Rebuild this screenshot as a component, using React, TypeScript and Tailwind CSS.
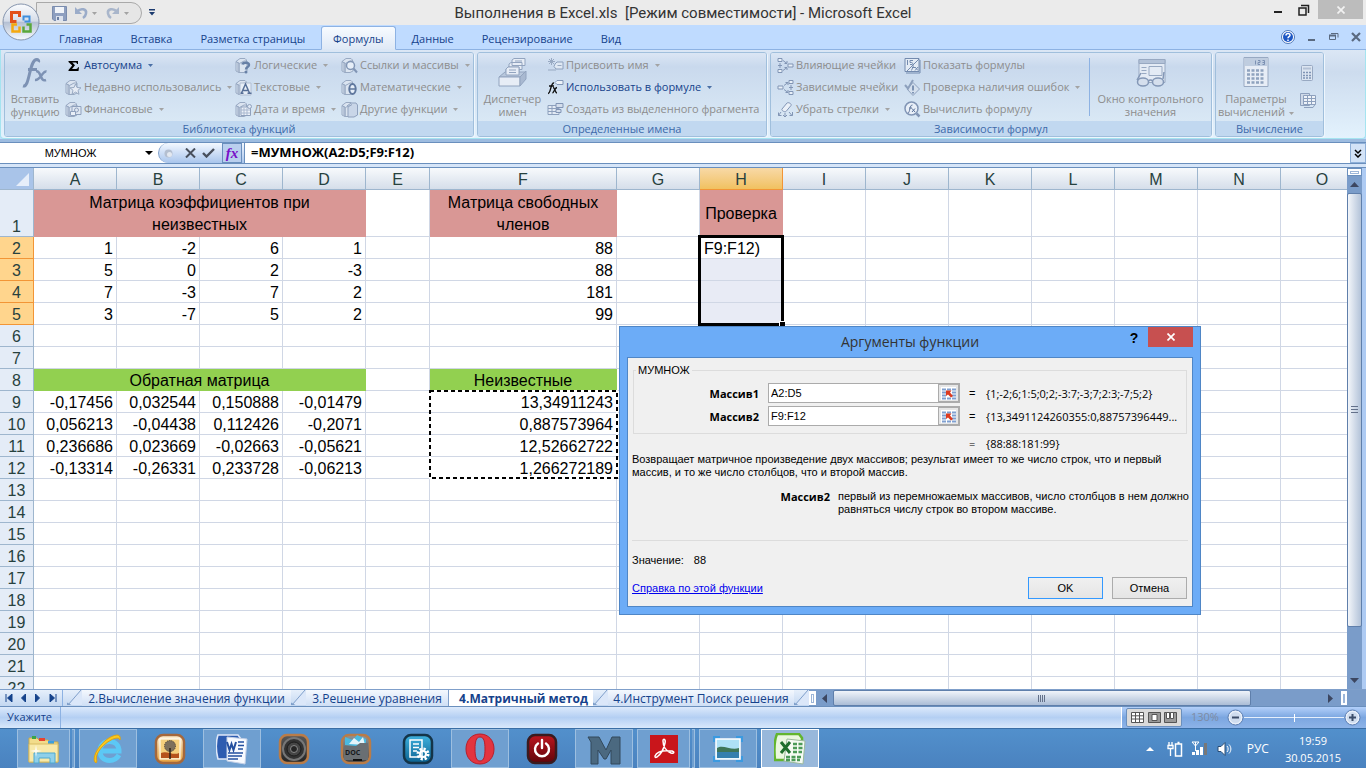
import type { ReactNode } from "react";
import clsx from "clsx";

const columns = [
  { name: "A", width: 83 },
  { name: "B", width: 83 },
  { name: "C", width: 83 },
  { name: "D", width: 83 },
  { name: "E", width: 64 },
  { name: "F", width: 187 },
  { name: "G", width: 83 },
  { name: "H", width: 83 },
  { name: "I", width: 83 },
  { name: "J", width: 83 },
  { name: "K", width: 83 },
  { name: "L", width: 83 },
  { name: "M", width: 83 },
  { name: "N", width: 83 },
  { name: "O", width: 83 },
];

const cells: Record<string, string> = {
  A1: "Матрица коэффициентов при неизвестных",
  F1: "Матрица свободных членов",
  H1: "Проверка",
  A2: "1", B2: "-2", C2: "6", D2: "1", F2: "88", H2: "F9:F12)",
  A3: "5", B3: "0", C3: "2", D3: "-3", F3: "88",
  A4: "7", B4: "-3", C4: "7", D4: "2", F4: "181",
  A5: "3", B5: "-7", C5: "5", D5: "2", F5: "99",
  A8: "Обратная матрица",
  F8: "Неизвестные",
  A9: "-0,17456", B9: "0,032544", C9: "0,150888", D9: "-0,01479", F9: "13,34911243",
  A10: "0,056213", B10: "-0,04438", C10: "0,112426", D10: "-0,2071", F10: "0,887573964",
  A11: "0,236686", B11: "0,023669", C11: "-0,02663", D11: "-0,05621", F11: "12,52662722",
  A12: "-0,13314", B12: "-0,26331", C12: "0,233728", D12: "-0,06213", F12: "1,266272189",
};

const pink = ["A1", "F1", "H1"];
const green = ["A8", "F8"];
const tabs = ["Главная", "Вставка", "Разметка страницы", "Формулы", "Данные", "Рецензирование", "Вид"];

/* ---------- ribbon icons ---------- */

const Book = ({ children }: { children?: ReactNode }) => (
  <svg width="17" height="17" viewBox="0 0 17 17" fill="none" className="shrink-0">
    <path d="M1 4.5 5 1.5h5l1.5 1.5v3M1 4.5V14l3 1.5V6.5L1 4.5Zm0 0L4.5 6.5 9 4h3v10l-3 1.5H4V6.5" fill="#dbe4f0" stroke="#98a9c2" />
    <path d="M2.5 6v8" stroke="#b7c5d9" />
    {children}
  </svg>
);

const Star = () => (
  <Book>
    <path d="m10.500 5 1.500 3.500 4 .3-3 2.500 1 4-3.500-2.200L7 15.300l1-4-3-2.500 4-.3Z" fill="#e6ecf5" stroke="#98a9c2" />
  </Book>
);

const Coins = () => (
  <Book>
    <path d="M7 5.500h9v8H7z" fill="#dfe7f2" stroke="#8fa1bd" />
    <circle cx="11.500" cy="9" r="2" stroke="#8fa1bd" />
    <path d="M5.500 10.500h5v4h-5z" fill="#e9eff7" stroke="#8fa1bd" />
  </Book>
);

const Question = () => (
  <Book>
    <path d="M7.500 7.500c.3-2.300 6.500-2.700 6.500.5 0 2.200-3 2-3 4.500" stroke="#6780a6" strokeWidth="2.400" />
    <circle cx="11" cy="15" r="1.500" fill="#6780a6" />
  </Book>
);

const Letter = () => (
  <Book>
    <path d="M5 4h11v12H5z" fill="#e7eef7" stroke="#b0bed3" />
    <path d="m6.500 14 4-9 4 9M8 11.500h5M5.500 14.300h3M12.500 14.300h4" stroke="#566f97" strokeWidth="1.500" />
  </Book>
);

const Calendar = () => (
  <Book>
    <path d="M6 6h9.500v8.500H6z" fill="#edf2f9" stroke="#8fa1bd" />
    <path d="M6 9h9M6 12h9M9 7v7M12 7v7" stroke="#a9b8cf" />
    <circle cx="14.500" cy="5.500" r="2" fill="#dfe7f2" stroke="#8fa1bd" />
  </Book>
);

const Lookup = () => (
  <Book>
    <circle cx="9.500" cy="8.500" r="4" fill="#e6eef8" stroke="#8195b5" strokeWidth="1.500" />
    <path d="m12.500 11.500 3.500 4" stroke="#8195b5" strokeWidth="2" />
  </Book>
);

const Theta = () => (
  <Book>
    <ellipse cx="11.500" cy="10" rx="3.200" ry="5" fill="#e6eef8" stroke="#5f779e" strokeWidth="2" />
    <path d="M8.500 10h6" stroke="#5f779e" strokeWidth="1.500" />
  </Book>
);

const Books = () => (
  <Book>
    <path d="m6 5 4-3h5l1.500 2v10L13 16H7V6l4-2.500" fill="#c9d6e8" stroke="#8fa1bd" />
  </Book>
);

const Sigma = () => (
  <svg width="17" height="17" viewBox="0 0 17 17" className="shrink-0">
    <path d="M3.500 4h9.500v3h-1c-.3-1.200-.7-1.500-2-1.500H7.300L10 8.300 7 12h4c1.300 0 1.700-.5 2-1.700h1l-.5 3.700h-10v-1l3.700-4.500L3.500 5Z" fill="#000" />
  </svg>
);

const NewName = () => (
  <svg width="17" height="17" viewBox="0 0 17 17" fill="none" className="shrink-0">
    <path d="m8 7 2-2h6v7H9L7 9.500Z" fill="#dfe8f3" stroke="#8da0bd" />
    <path d="M10.500 8.500h4M1 13h8M4.500 1v7M1 4.500h7M2 2l5 5M7 2 2 7" stroke="#98a9c2" />
  </svg>
);

const UseName = () => (
  <svg width="17" height="17" viewBox="0 0 17 17" fill="none" className="shrink-0">
    <path d="M1 14.500c3 0 2.500-11 6-10.500M2 7h5M6 8.500c2 0 2 5.500 4 5.500M10 8.500c-2 0-3 5-4.500 5.500" stroke="#111" strokeWidth="1.400" />
    <path d="m8 3.500 2-2h6v4H10Z" fill="#edf2f9" stroke="#8195b5" />
  </svg>
);

const CreateNames = () => (
  <svg width="17" height="17" viewBox="0 0 17 17" fill="none" className="shrink-0">
    <path d="M1 4.500h11v9H1zM1 7.500h11M1 10.500h11M5 4.500v9" fill="#e3ebf5" stroke="#8da0bd" />
    <path d="M9 2.500h7v4H9zM9 8.500h5v3H9z" fill="#d4deec" stroke="#8195b5" />
  </svg>
);

const Precedents = () => (
  <svg width="17" height="17" viewBox="0 0 17 17" fill="none" className="shrink-0" stroke="#8195b5">
    <path d="M1 1.500h4v3H1zM1 12.500h4v3H1zM11 7h5v3h-5z" fill="#e9f0f8" />
    <path d="M3 6v5M1 8.500h4M6 3.500l4 3M10 4v2.500H7.500M6 13.500l4-3M10 13v-2.500H7.500" />
  </svg>
);

const Dependents = () => (
  <svg width="17" height="17" viewBox="0 0 17 17" fill="none" className="shrink-0" stroke="#8195b5">
    <path d="M12 1.500h4v3h-4zM12 12.500h4v3h-4zM1 7h5v3H1z" fill="#e9f0f8" />
    <path d="M14 6v5M12 8.500h4M7 6.500l4-3M8.500 3.500H11V6M7 10.500l4 3M8.500 13.500H11V11" />
  </svg>
);

const ClearArrows = () => (
  <svg width="17" height="17" viewBox="0 0 17 17" fill="none" className="shrink-0" stroke="#8195b5">
    <path d="m5 8 5-6c1-1 5 .5 4 2.500l-5 6c-1 1-5-1-4-2.500Z" fill="#eaf0f8" />
    <path d="M4 11l-2.500 3.500M1.500 11.500v3h3M8 12v4M6 14l2 2 2-2M12 11l3 3.500M15.500 11v3.500h-3" />
  </svg>
);

const ShowFormulas = () => (
  <svg width="17" height="17" viewBox="0 0 17 17" fill="none" className="shrink-0" stroke="#738aae">
    <path d="M1 1.500h14v13H1z" fill="#e3ebf5" />
    <path d="M15 2 2 15M3.500 3v5M6 7.500h2c1 0 1-2-.500-2H6V3.500h3M7 13.500c1.500 0 1.500-5 3-5M8 10.500h3M11 10l3 3.500M14 10l-3 3.500M2 16h14V3" />
  </svg>
);

const ErrorCheck = () => (
  <svg width="17" height="17" viewBox="0 0 17 17" fill="none" className="shrink-0" stroke="#8da0bd">
    <path d="m9 3.500 6.500 6.500L9 16.500 3 10Z" fill="#d4dfed" />
    <path d="M1 6l3 3.500L9 1" strokeWidth="2" />
    <path d="M9 6.500v5M9 13v1.500" stroke="#617aa1" strokeWidth="1.500" />
  </svg>
);

const Evaluate = () => (
  <svg width="17" height="17" viewBox="0 0 17 17" fill="none" className="shrink-0" stroke="#8195b5">
    <circle cx="7.500" cy="7.500" r="6.500" fill="#e8eff8" strokeWidth="1.500" />
    <path d="m12.500 12.500 3 3" strokeWidth="2.500" />
    <path d="M4 12C6 12 5.500 3.500 8.500 4M5 7h3M8 7.500l3 3.500M11 7.500 8 11" stroke="#5a7299" />
  </svg>
);

const BigFx = () => (
  <svg width="32" height="32" viewBox="0 0 32 32" fill="none" stroke="#7d92b4">
    <path d="M4 29c7 2 6-27 14-26.500 1.500.2 2 1.500 1.500 2.500M9 12.500h9" strokeWidth="3" />
    <path d="M17 14.500c5-2 4 11 10 8.500M27.500 14.500c-4-1-6 9-11.500 8.500" strokeWidth="2.500" />
  </svg>
);

const NameManager = () => (
  <svg width="32" height="32" viewBox="0 0 32 32" fill="#e7edf6" stroke="#92a4bf">
    <path d="m15 3 2-1.500h11v7H15ZM12 7l2-1.500h11v7H12ZM9 12l2-2h11v8H9Z" />
    <path d="m2 20 6-5h21l-5 5H2Z" fill="#b8c7dc" />
    <path d="m9 12 2-2h11v8H9Z" />
    <path d="M2 20h21v9H2z" />
    <path d="m23 20 6-6v8l-6 7Z" fill="#a9b9d1" />
    <path d="M12 13h7M12 15.500h7M15 8.500h7M18 4h7" />
  </svg>
);

const WatchWindow = () => (
  <svg width="32" height="32" viewBox="0 0 32 32" fill="none" stroke="#98a9c2">
    <path d="M4 2.500h26v23H4z" fill="#e4ebf5" />
    <path d="M4 2.500h26v4H4z" fill="#b3c2d8" />
    <path d="M14 9.500h13v9H14zM6.500 10.500h5M6.500 13.500h5M6.500 16.500h5" />
    <path d="M2 23 6 16M28 22l1-7" stroke="#8397b6" strokeWidth="1.500" />
    <ellipse cx="8" cy="25" rx="5.500" ry="4" fill="#d5dfed" stroke="#8397b6" strokeWidth="1.500" />
    <ellipse cx="23" cy="25" rx="5.500" ry="4" fill="#d5dfed" stroke="#8397b6" strokeWidth="1.500" />
    <path d="M13.500 24c1-1.500 3-1.500 4 0" stroke="#8397b6" strokeWidth="1.500" />
  </svg>
);

const CalcOptions = () => (
  <svg width="32" height="32" viewBox="0 0 32 32" fill="none" stroke="#98a9c2">
    <path d="M4 .5h24v29H4z" fill="#e7edf6" />
    <path d="M5 1h22v8H5z" fill="#bfcde0" stroke="none" />
    <path d="M15.500 3.500v4M18 3.500h2v2h-2v2h2M22.500 3.500h2v4h-2M22.500 5.500h2" stroke="#7c91b3" />
    <path d="M7 13.500h18M7 17.500h18M7 21.500h18M7 25.500h18" stroke="#8fa2be" strokeWidth="2.500" strokeDasharray="3 1.500" />
  </svg>
);

const SmallCalc = () => (
  <svg width="16" height="18" viewBox="0 0 16 18" fill="none" stroke="#98a9c2">
    <rect x="2.500" y="1.500" width="11" height="15" rx="1" fill="#dce5f1" />
    <path d="M4 4.500h8" strokeWidth="2" stroke="#b3c1d6" />
    <path d="M4 8.500h8M4 11.500h8M4 14h8" stroke="#7f94b5" strokeWidth="1.500" strokeDasharray="2 1" />
  </svg>
);

const SheetCalc = () => (
  <svg width="17" height="18" viewBox="0 0 17 18" fill="none" stroke="#8da0bd">
    <path d="M1.500 1.500h9v12h-9z" fill="#ced9e8" />
    <path d="M4.500 3.500h12v9h-12z" fill="#eef3f9" />
    <path d="M4.500 6.500h12M4.500 9.500h12M8.500 3.500v9M12.500 3.500v9M5 15.500h9l2-3" />
  </svg>
);

const Caret = ({ dark }: { dark?: boolean }) => (
  <svg width="5" height="3" viewBox="0 0 5 3" className="ml-1 inline-block shrink-0">
    <path d="M0 0h5L2.500 3Z" fill={dark ? "#4a6fa5" : "#a3a3a3"} />
  </svg>
);

const RibbonItem = ({ icon, label, active, menu }: { icon: ReactNode; label: string; active?: boolean; menu?: boolean }) => (
  <button
    type="button"
    className={clsx("flex h-[22px] items-center gap-[2px] whitespace-nowrap", active ? "text-[#15428b]" : "text-[#8d8d8d]")}
  >
    {icon}
    <span>{label}</span>
    {menu && <Caret dark={active} />}
  </button>
);

const BigButton = ({ icon, lines, menu }: { icon: ReactNode; lines: string[]; menu?: boolean }) => (
  <button type="button" className="flex flex-col items-center pt-[4px] leading-[13px] whitespace-nowrap text-[#8d8d8d]">
    <span className="mb-[3px]">{icon}</span>
    <span>{lines[0]}</span>
    <span>
      {lines[1]}
      {menu && <Caret />}
    </span>
  </button>
);

const Group = ({ title, className, children }: { title: string; className: string; children: ReactNode }) => (
  <section className={clsx("flex h-[85px] shrink-0 flex-col overflow-hidden rounded-[3px] border border-[#a0bfdc] shadow-[1px_1px_0_#eef6fd]", className)}>
    <div className="flex min-h-0 flex-1 justify-between bg-linear-to-b from-[#dbe6f4] via-[#c9d9ed] via-20% to-[#d9e8f5]">{children}</div>
    <h2 className="h-[15px] shrink-0 bg-[#c1d8f0] text-center leading-[15px] text-[#3e6aaa]">{title}</h2>
  </section>
);

/* ---------- window chrome ---------- */

const OfficeButton = () => (
  <button type="button" aria-label="Office" className="absolute top-[3px] left-[2px] z-10">
    <svg width="38" height="38" viewBox="0 0 38 38" fill="none">
      <defs>
        <linearGradient id="orb" x1="0" y1="0" x2="0" y2="1">
          <stop offset="0" stopColor="#fbfcfe" />
          <stop offset=".48" stopColor="#d5dce8" />
          <stop offset=".5" stopColor="#b3bfd2" />
          <stop offset="1" stopColor="#f8fbff" />
        </linearGradient>
      </defs>
      <circle cx="19" cy="19" r="18" fill="url(#orb)" stroke="#8594ad" />
      <path d="M17.500 14V9.500h-8v9h5" stroke="#e2511a" strokeWidth="3" />
      <path d="M21.500 17.500v-4h6v5h-5" stroke="#3f8fdd" strokeWidth="2" />
      <path d="M15 21.500h-4.500v7h7v-5" stroke="#f5a90f" strokeWidth="2.500" />
      <path d="M21.500 23.500v5h7v-7h-4" stroke="#59a83b" strokeWidth="2.500" />
    </svg>
  </button>
);

const TitleBar = () => (
  <header className="grid h-[25px] shrink-0 grid-cols-[1fr_auto_1fr] bg-[#ebebeb]">
    <div className="flex items-start pt-[2px] pl-9">
      <div className="flex h-[22px] w-[106px] items-center rounded-r-full border border-[#a9a9a9] bg-[#e6e6e6] pl-[15px]">
        <button type="button" aria-label="Сохранить">
          <svg width="15" height="15" viewBox="0 0 15 15">
            <path d="M.5.500h14v14H2l-1.500-1.500Z" fill="#8e9fc0" stroke="#7a8cae" />
            <path d="M3 1h9v6H3z" fill="#f1f4f9" />
            <path d="M4 10h7v5H4z" fill="#dde3ee" />
            <path d="M5 11h2v3H5z" fill="#6c7fa3" />
          </svg>
        </button>
        <button type="button" aria-label="Отменить" className="ml-2 flex items-center">
          <svg width="14" height="14" viewBox="0 0 14 14" fill="none">
            <path d="M2 5.500C6 1.500 12 3 11 7.500c-.3 2-1.500 3.500-3 4.500" stroke="#9bacc9" strokeWidth="2.500" />
            <path d="M0 1v7h7Z" fill="#9bacc9" />
          </svg>
          <svg width="5" height="3" viewBox="0 0 5 3" className="ml-[3px]"><path d="M0 0h5L2.500 3Z" fill="#a3a3a3" /></svg>
        </button>
        <button type="button" aria-label="Вернуть" className="ml-2 flex items-center">
          <svg width="14" height="14" viewBox="0 0 14 14" fill="none">
            <path d="M12 5.500C8 1.500 2 3 3 7.500c.3 2 1.500 3.500 3 4.500" stroke="#a9b6cb" strokeWidth="2.500" />
            <path d="M14 1v7H7Z" fill="#a9b6cb" />
          </svg>
          <svg width="5" height="3" viewBox="0 0 5 3" className="ml-[5px]"><path d="M0 0h5L2.500 3Z" fill="#a3a3a3" /></svg>
        </button>
      </div>
      <button type="button" aria-label="Настройка панели" className="mt-[7px] ml-[7px]">
        <svg width="6" height="7" viewBox="0 0 6 7"><path d="M0 0h6v1.500H0zM0 3h6L3 6.500Z" fill="#1c3b6f" /></svg>
      </button>
    </div>
    <h1 className="pt-px font-['Roboto','Open_Sans',sans-serif] text-[15px] leading-[24px] whitespace-pre text-[#333]">Выполнения в Excel.xls  [Режим совместимости] - Microsoft Excel</h1>
    <div className="flex items-start justify-end pr-[3px]">
      <button type="button" aria-label="Свернуть" className="flex h-[19px] w-[26px] items-center">
        <svg width="12" height="12" viewBox="0 0 12 12"><path d="M2 7h8v2H2z" fill="#222" /></svg>
      </button>
      <button type="button" aria-label="Восстановить" className="flex h-[19px] w-5 items-center">
        <svg width="12" height="12" viewBox="0 0 12 12" fill="none" stroke="#222"><path d="M1 4h7v7H1zM3 1.500h7.500V9" strokeWidth="1.500" /></svg>
      </button>
      <button type="button" aria-label="Закрыть" className="flex h-[19px] w-[45px] items-center justify-center bg-[#bcbcbc]">
        <svg width="8" height="8" viewBox="0 0 8 8" stroke="#f2f2f2" strokeWidth="1.700"><path d="m.5.500 7 7M7.500.500l-7 7" /></svg>
      </button>
    </div>
  </header>
);

const TabRow = () => (
  <nav className="flex h-[25px] shrink-0 items-end justify-between border-b border-[#8db2e3] bg-[#bfdbff] pl-[47px]">
    <div className="flex h-full items-end gap-[4px] text-[11px]">
      {tabs.map((tab) => (
        <button
          key={tab}
          type="button"
          className={clsx(
            "-mb-px h-[24px] rounded-t-[3px] border px-[11px] leading-[23px] text-[#15428b]",
            tab === "Формулы" ? "border-[#8db2e3] border-b-[#dbe7f5] bg-linear-to-b from-[#f7fbff] to-[#dfe9f6]" : "border-transparent",
          )}
        >
          {tab}
        </button>
      ))}
    </div>
    <div className="flex h-full items-center gap-3 pr-[5px]">
      <button type="button" aria-label="Справка">
        <svg width="14" height="14" viewBox="0 0 14 14" fill="none">
          <circle cx="7" cy="7" r="6.500" fill="#fff" stroke="#4f78b8" />
          <circle cx="7" cy="7" r="5" fill="#1d57c4" />
          <path d="M5 5.500C5 3 9 3 9 5.200c0 1.500-2 1.400-2 3M7 9.500V11" stroke="#fff" strokeWidth="1.500" />
        </svg>
      </button>
      <button type="button" aria-label="Свернуть книгу">
        <svg width="10" height="10" viewBox="0 0 10 10"><path d="M1 7h7v2H1z" fill="#5a6a80" /></svg>
      </button>
      <button type="button" aria-label="Восстановить книгу">
        <svg width="10" height="10" viewBox="0 0 10 10" fill="none" stroke="#5a6a80"><path d="M.5 3.500h6v4h-6zM2 1.500h7v4" /><path d="M0 3.500h7" strokeWidth="2" /></svg>
      </button>
      <button type="button" aria-label="Закрыть книгу">
        <svg width="10" height="10" viewBox="0 0 10 10" stroke="#5a6a80" strokeWidth="2.200"><path d="m1 1 8 8M9 1 1 9" /></svg>
      </button>
    </div>
  </nav>
);

const Ribbon = () => (
  <div className="h-[92px] shrink-0 border-b-[3px] border-[#9dbce0] bg-[#bfdbff]">
    <div className="flex h-[89px] gap-[3px] overflow-hidden rounded-b-[4px] border-x border-b border-[#a5e4f0] bg-linear-to-b from-[#dbe7f5] via-[#cddcee] via-25% to-[#e3f2fd] pt-[2px] pl-[3px] text-[11px]">
      <Group title="Библиотека функций" className="w-[470px]">
        <div className="grid w-full grid-cols-[60px_170px_106px_1fr]">
          <BigButton icon={<BigFx />} lines={["Вставить", "функцию"]} />
          <div className="flex flex-col pt-px">
            <RibbonItem icon={<Sigma />} label="Автосумма" active menu />
            <RibbonItem icon={<Star />} label="Недавно использовались" menu />
            <RibbonItem icon={<Coins />} label="Финансовые" menu />
          </div>
          <div className="flex flex-col pt-px">
            <RibbonItem icon={<Question />} label="Логические" menu />
            <RibbonItem icon={<Letter />} label="Текстовые" menu />
            <RibbonItem icon={<Calendar />} label="Дата и время" menu />
          </div>
          <div className="flex flex-col pt-px">
            <RibbonItem icon={<Lookup />} label="Ссылки и массивы" menu />
            <RibbonItem icon={<Theta />} label="Математические" menu />
            <RibbonItem icon={<Books />} label="Другие функции" menu />
          </div>
        </div>
      </Group>
      <Group title="Определенные имена" className="w-[290px]">
        <div className="grid w-full grid-cols-[69px_1fr]">
          <BigButton icon={<NameManager />} lines={["Диспетчер", "имен"]} />
          <div className="flex flex-col pt-px">
            <RibbonItem icon={<NewName />} label="Присвоить имя" menu />
            <RibbonItem icon={<UseName />} label="Использовать в формуле" active menu />
            <RibbonItem icon={<CreateNames />} label="Создать из выделенного фрагмента" />
          </div>
        </div>
      </Group>
      <Group title="Зависимости формул" className="w-[442px]">
        <div className="grid w-full grid-cols-[127px_185px_1fr] pl-[6px]">
          <div className="flex flex-col pt-px">
            <RibbonItem icon={<Precedents />} label="Влияющие ячейки" />
            <RibbonItem icon={<Dependents />} label="Зависимые ячейки" />
            <RibbonItem icon={<ClearArrows />} label="Убрать стрелки" menu />
          </div>
          <div className="flex flex-col pt-px">
            <RibbonItem icon={<ShowFormulas />} label="Показать формулы" />
            <RibbonItem icon={<ErrorCheck />} label="Проверка наличия ошибок" menu />
            <RibbonItem icon={<Evaluate />} label="Вычислить формулу" />
          </div>
          <div className="flex">
            <span className="my-[5px] border-l border-[#8db2e3]" />
            <div className="grid flex-1">
              <BigButton icon={<WatchWindow />} lines={["Окно контрольного", "значения"]} />
            </div>
          </div>
        </div>
      </Group>
      <Group title="Вычисление" className="w-[109px]">
        <div className="grid w-full grid-cols-[80px_1fr]">
          <BigButton icon={<CalcOptions />} lines={["Параметры", "вычислений"]} menu />
          <div className="flex flex-col items-start gap-[10px] pt-[11px] pl-[3px]">
            <button type="button" aria-label="Пересчет"><SmallCalc /></button>
            <button type="button" aria-label="Произвести вычисления"><SheetCalc /></button>
          </div>
        </div>
      </Group>
    </div>
  </div>
);

const FormulaBar = () => (
  <div className="flex h-[26px] shrink-0 border-b border-[#6a8fbd] bg-[#d6e5f8] pb-[3px]">
    <div className="flex min-w-0 flex-1 border-y border-[#6a8fbd] bg-white">
      <div className="flex w-[158px] shrink-0 items-center">
        <input aria-label="Имя" defaultValue="МУМНОЖ" className="h-full w-[141px] text-center font-['Liberation_Sans',sans-serif] text-[11px] outline-none" />
        <button type="button" aria-label="Список функций" className="ml-[4px]">
          <svg width="8" height="4" viewBox="0 0 8 4"><path d="M0 0h8L4 4Z" fill="#000" /></svg>
        </button>
      </div>
      <div className="flex w-[86px] shrink-0 items-center justify-between rounded-l-full border-l border-[#7f9fca] bg-linear-to-b from-[#f3f8ff] to-[#a9c5ec] pl-[5px]">
        <svg width="9" height="9" viewBox="0 0 9 9"><circle cx="4.500" cy="4.500" r="4" fill="#b4bfd0" /><circle cx="5.500" cy="5.500" r="2.500" fill="#e3e8f0" /></svg>
        <button type="button" aria-label="Отмена ввода" className="ml-[5px]">
          <svg width="11" height="10" viewBox="0 0 11 10" stroke="#484f5c" strokeWidth="2"><path d="m1 .5 9 9M10 .5l-9 9" /></svg>
        </button>
        <button type="button" aria-label="Ввод">
          <svg width="13" height="10" viewBox="0 0 13 10" fill="none" stroke="#484f5c" strokeWidth="2.400"><path d="m1 5 3.500 3.500L12 1" /></svg>
        </button>
        <button type="button" aria-label="Вставить функцию" className="mr-[2px] flex h-full w-[20px] items-center justify-center border border-[#6a8fbd] bg-[#b9cfee] font-['Liberation_Serif',serif] text-[15px] leading-none font-bold text-[#7a10c8] italic">
          fx
        </button>
      </div>
      <input aria-label="Строка формул" defaultValue="=МУМНОЖ(A2:D5;F9:F12)" className="min-w-0 flex-1 border-l border-[#6a8fbd] pl-[6px] text-[13px] font-bold text-black outline-none" />
      <button type="button" aria-label="Развернуть строку формул" className="flex w-4 items-center justify-center border border-[#8fb0d8] bg-[#d3e3f7]">
        <svg width="8" height="9" viewBox="0 0 8 9" fill="none" stroke="#000" strokeWidth="1.500"><path d="m1 1 3 3 3-3M1 5l3 3 3-3" /></svg>
      </button>
    </div>
  </div>
);

/* ---------- sheet ---------- */

const Cell = ({ name }: { name: string }) => {
  const text = cells[name];
  const isPink = pink.includes(name);
  const isGreen = green.includes(name);
  const selected = ["H3", "H4", "H5"].includes(name);
  return (
    <td
      colSpan={name === "A1" || name === "A8" ? 4 : 1}
      className={clsx(
        "relative border-r border-b pb-0",
        isPink && "border-[#d99795] bg-[#d99795] pt-[2px] text-center align-middle leading-[22px]",
        isPink && (name === "A1" ? "px-10" : "px-0"),
        isGreen && "border-[#92d050] bg-[#92d050] px-0 pt-[2px] text-center",
        !isPink && !isGreen && "border-[#d0d7e5] pt-[2px] pr-[3px] pl-0 text-right whitespace-nowrap",
        selected && "bg-[#e8ebf5]",
      )}
    >
      {name === "H2" ? <span className="block pl-1 text-left">{text}</span> : text}
      {name === "H2" && (
        <span className="pointer-events-none absolute -top-[2px] -left-[2px] z-10 h-[91px] w-[86px] border-[3px] border-black">
          <span className="absolute -right-[4px] -bottom-[4px] size-[6px] border-t border-l border-white bg-black" />
        </span>
      )}
      {name === "F9" && (
        <svg width="189" height="89" viewBox="0 0 189 89" fill="none" className="pointer-events-none absolute -top-px -left-px z-10">
          <path d="M1 1h187v87H1Z" stroke="#fff" strokeWidth="2" />
          <path d="M1 1h187v87H1Z" stroke="#000" strokeWidth="2" strokeDasharray="4 3" />
        </svg>
      )}
    </td>
  );
};

const Sheet = () => (
  <div className="min-w-0 flex-1 overflow-hidden">
    <table className="w-px table-fixed border-separate border-spacing-0 font-['Liberation_Sans',sans-serif] text-[16px] leading-[19px] text-black">
      <colgroup>
        <col className="w-[34px]" />
        {columns.map((c) => (
          <col key={c.name} style={{ width: c.width }} />
        ))}
      </colgroup>
      <thead>
        <tr className="h-[22px] text-[#27413e]">
          <td className="border-r border-b border-[#9eb6ce] bg-[#a9c4e9] p-0">
            <svg width="33" height="20" viewBox="0 0 33 20"><path d="M29 4v13H16Z" fill="#e6eefa" /></svg>
          </td>
          {columns.map((c) => (
            <th
              key={c.name}
              scope="col"
              className={clsx(
                "border-r border-b bg-linear-to-b px-0 pt-[2px] pb-0 font-normal",
                c.name === "H" ? "border-[#f29536] from-[#f8d9a6] to-[#f1c15f]" : "border-[#9eb6ce] from-[#f8fafc] to-[#d5deea]",
              )}
            >
              {c.name}
            </th>
          ))}
        </tr>
      </thead>
      <tbody>
        {Array.from({ length: 22 }, (_, i) => i + 1).map((row) => (
          <tr key={row} className={row === 1 ? "h-[47px]" : "h-[22px]"}>
            <th
              scope="row"
              className={clsx(
                "border-r border-b px-0 pt-[2px] pb-0 align-bottom font-normal text-[#27413e]",
                row >= 2 && row <= 5 ? "border-[#f29536] bg-[#ffd58d]" : "border-[#9eb6ce] bg-[#e4ecf7]",
              )}
            >
              {row}
            </th>
            {columns
              .filter((c) => !((row === 1 || row === 8) && ["B", "C", "D"].includes(c.name)))
              .map((c) => (
                <Cell key={c.name} name={c.name + row} />
              ))}
          </tr>
        ))}
      </tbody>
    </table>
  </div>
);

const VerticalScroll = () => (
  <div className="flex w-[19px] shrink-0 border-r-4 border-[#aecbf3] bg-[#7a9cc9]">
    <div className="flex w-full flex-col items-center">
      <div className="flex h-[8px] w-full shrink-0 items-center justify-center border border-[#6a8fbd] bg-white">
        <span className="h-[3px] w-[9px] border border-[#9db6d8]" />
      </div>
      <button type="button" aria-label="Вверх" className="flex h-[17px] w-full shrink-0 items-center justify-center">
        <svg width="9" height="5" viewBox="0 0 9 5"><path d="M0 5h9L4.500 0Z" fill="#3c4660" /></svg>
      </button>
      <div className="flex h-[434px] w-full items-center justify-center rounded-[2px] border border-[#5f7fab] bg-linear-to-r from-[#f3f6fa] to-[#b3c3d9]">
        <svg width="7" height="9" viewBox="0 0 7 9" stroke="#63718a"><path d="M0 .5h7M0 3.500h7M0 6.500h7" /></svg>
      </div>
      <span className="flex-1" />
      <button type="button" aria-label="Вниз" className="flex h-[17px] w-full shrink-0 items-center justify-center">
        <svg width="9" height="5" viewBox="0 0 9 5"><path d="M0 0h9L4.500 5Z" fill="#3c4660" /></svg>
      </button>
    </div>
  </div>
);

const Slash = () => (
  <svg width="15" height="15" viewBox="0 0 15 15" className="shrink-0" fill="none">
    <path d="M1 15 14 0h1v15Z" fill="#dbe7f9" />
    <path d="M1 15 14 0" stroke="#7f9fca" />
    <path d="M0 12.500V15h4.500Z" fill="#7f9fca" />
  </svg>
);

const SheetTabs = () => (
  <div className="flex h-[17px] shrink-0 border-t border-[#7f9fca] bg-linear-to-b from-[#e6effb] to-[#c3d7f1] text-[12px]">
    <div className="flex w-[63px] shrink-0 items-center justify-between border-r border-[#8db2e3] px-[5px]">
      {["M1 0v8M7 0v8L2.500 4Z", "M5.500 0v8L1.500 4Z", "M1.500 0v8l4-4Z", "M7 0v8M1 0v8l4.500-4Z"].map((d) => (
        <button key={d} type="button" aria-label="Листать">
          <svg width="8" height="8" viewBox="0 0 8 8" fill="#15428b" stroke="#15428b"><path d={d} /></svg>
        </button>
      ))}
    </div>
    <div className="flex w-[746px] shrink-0 overflow-hidden pl-[4px] leading-[15px] whitespace-nowrap text-[#15428b]">
      <Slash />
      <button type="button" className="w-[209px] shrink-0 bg-linear-to-b from-[#f4f8fe] to-[#cfdff5] text-center">2.Вычисление значения функции</button>
      <Slash />
      <button type="button" className="w-[143px] shrink-0 border-r border-[#7f9fca] bg-linear-to-b from-[#f4f8fe] to-[#cfdff5] text-center">3.Решение уравнения</button>
      <button type="button" className="w-[144px] shrink-0 bg-white pl-[5px] text-center font-bold">4.Матричный метод</button>
      <Slash />
      <button type="button" className="w-[186px] shrink-0 bg-linear-to-b from-[#f4f8fe] to-[#cfdff5] text-center">4.Инструмент Поиск решения</button>
      <Slash />
    </div>
    <div className="flex min-w-0 flex-1 items-stretch bg-[#7a9cc9]">
      <span className="my-px flex w-[7px] items-center justify-center bg-white"><span className="h-[9px] w-[3px] border border-[#9db6d8]" /></span>
      <button type="button" aria-label="Влево" className="flex w-[17px] items-center justify-center">
        <svg width="5" height="9" viewBox="0 0 5 9"><path d="M5 0v9L0 4.500Z" fill="#3c4660" /></svg>
      </button>
      <div className="flex w-3/4 items-center justify-center rounded-[2px] border border-[#5f7fab] bg-linear-to-b from-[#f0f4fa] to-[#abbdd6]">
        <svg width="8" height="7" viewBox="0 0 8 7" stroke="#63718a"><path d="M.5 0v7M2.500 0v7M4.500 0v7M6.500 0v7" /></svg>
      </div>
      <span className="flex-1" />
      <button type="button" aria-label="Вправо" className="mr-[8px] flex items-center">
        <svg width="5" height="9" viewBox="0 0 5 9"><path d="M0 0v9l5-4.500Z" fill="#3c4660" /></svg>
      </button>
      <span className="my-px flex w-[6px] items-center justify-center bg-white"><span className="h-[9px] w-[2px] bg-[#9db6d8]" /></span>
      <span className="w-[19px]" />
    </div>
  </div>
);

const ZoomButton = ({ label, d }: { label: string; d: string }) => (
  <button type="button" aria-label={label} className="shrink-0">
    <svg width="17" height="17" viewBox="0 0 17 17" fill="none">
      <circle cx="8.500" cy="8.500" r="7.500" fill="#e8eff9" stroke="#5b7eb2" />
      <circle cx="8.500" cy="8.500" r="5.500" fill="#cfdcee" />
      <path d={d} stroke="#3c4d69" strokeWidth="2" />
    </svg>
  </button>
);

const StatusBar = () => (
  <footer className="flex h-[22px] shrink-0 border-t border-[#6a8fbd] bg-linear-to-b from-[#dce9fb] via-[#b4cff3] to-[#d9e8fb] text-[11px]">
    <p className="w-[61px] shrink-0 border-r border-[#8db2e3] pl-[7px] leading-[20px] text-[#15428b]">Укажите</p>
    <span className="flex-1" />
    <div className="flex w-[245px] shrink-0 items-center border-l border-white bg-linear-to-b from-[#b3d0fa] via-[#7ba6e0] to-[#8db3e8] pr-[5px] pl-[4px]">
      <div className="flex h-[19px] w-[56px] shrink-0 items-center justify-evenly rounded-[2px] border border-[#6a8fbd] bg-[#dadada]">
        <button type="button" aria-label="Обычный"><svg width="13" height="11" viewBox="0 0 13 11" fill="#fff" stroke="#555"><path d="M.5.500h12v10H.5ZM.5 3.800h12M.5 7h12M4.500.500v10M8.500.500v10" /></svg></button>
        <button type="button" aria-label="Разметка"><svg width="13" height="11" viewBox="0 0 13 11" fill="#999" stroke="#555"><path d="M.5.500h12v10H.5Z" /><path d="M4 2.500h5v6H4Z" fill="#fff" /></svg></button>
        <button type="button" aria-label="Страничный"><svg width="13" height="11" viewBox="0 0 13 11" fill="#999" stroke="#555"><path d="M.5.500h12v10H.5Z" /><path d="M2.500.500h3v6h-3zM6.500.500h3v6h-3z" fill="#fff" /></svg></button>
      </div>
      <span className="ml-[9px] w-[36px] text-[11px] text-[#7d8ba3]">130%</span>
      <ZoomButton label="Уменьшить" d="M5 8.500h7" />
      <input
        type="range"
        aria-label="Масштаб"
        defaultValue={50}
        className="h-[9px] min-w-0 flex-1 appearance-none bg-[linear-gradient(#e5effc,#e5effc)] bg-[length:100%_1px] bg-center bg-no-repeat [&::-webkit-slider-thumb]:h-[8px] [&::-webkit-slider-thumb]:w-px [&::-webkit-slider-thumb]:appearance-none [&::-webkit-slider-thumb]:bg-white"
      />
      <ZoomButton label="Увеличить" d="M5 8.500h7M8.500 5v7" />
    </div>
  </footer>
);

/* ---------- function arguments dialog ---------- */

const RefIcon = () => (
  <svg width="15" height="13" viewBox="0 0 15 13" fill="none">
    <path d="M0 0h15v13H0z" fill="#fff" />
    <path d="M1 2.500h4M1 5.500h4M1 8.500h4M1 11.500h4M6 2.500h4M6 11.500h4M11 2.500h4M11 5.500h4M11 8.500h4M11 11.500h4" stroke="#7f9fd0" strokeWidth="2" />
    <path d="M5 3.500h5.500L9 5.500l3 3.500-2 1.500L7 7.500 5 9Z" fill="#dd3a1f" />
  </svg>
);

const Argument = ({ label, value, result }: { label: string; value: string; result: string }) => (
  <div className="flex h-[20px] items-center">
    <label htmlFor={label} className="w-[125px] text-right font-['Open_Sans','Noto_Sans',sans-serif] font-bold">{label}</label>
    <div className="ml-[9px] flex h-full w-[192px] border border-[#ababab] bg-white">
      <input id={label} defaultValue={value} className="min-w-0 flex-1 pl-[2px] outline-none" />
      <button type="button" aria-label="Выбрать диапазон" className="flex w-[21px] items-center justify-center border border-[#ababab] bg-[#e6e6e6]">
        <RefIcon />
      </button>
    </div>
    <span className="ml-[9px] w-[17px]">=</span>
    <span className="font-['Open_Sans','Noto_Sans',sans-serif] whitespace-nowrap">{result}</span>
  </div>
);

const ArgumentsDialog = () => (
  <div role="dialog" aria-labelledby="dialog-title" className="absolute top-[326px] left-[619px] z-20 flex h-[289px] w-[582px] flex-col border border-[#4f86c6] bg-[#6cacf7] px-[7px] pb-[7px] font-['Liberation_Sans',sans-serif] text-[11px] leading-[13px] text-black">
    <div className="grid h-[30px] shrink-0 grid-cols-[1fr_auto_1fr]">
      <h2 id="dialog-title" className="col-start-2 font-['Open_Sans','Noto_Sans',sans-serif] text-[14px] leading-[30px] text-[#333]">Аргументы функции</h2>
      <div className="flex items-start justify-end">
        <button type="button" aria-label="Справка" className="w-[28px] pt-px text-[14px] leading-[20px] font-bold">?</button>
        <button type="button" aria-label="Закрыть" className="flex h-[20px] w-[45px] items-center justify-center bg-[#c75050]">
          <svg width="8" height="8" viewBox="0 0 8 8" stroke="#fff" strokeWidth="1.700"><path d="m.5.500 7 7M7.500.500l-7 7" /></svg>
        </button>
      </div>
    </div>
    <div className="flex flex-1 flex-col border border-[#4f86c6] bg-[#f0f0f0] pt-[6px] pb-[7px] pl-[4px]">
      <fieldset className="mr-[5px] ml-px h-[70px] border border-[#dcdcdc] px-0">
        <legend className="ml-[2px] px-[2px]">МУМНОЖ</legend>
        <div className="mt-[6px] flex flex-col gap-[3px]">
          <Argument label="Массив1" value="A2:D5" result="{1;-2;6;1:5;0;2;-3:7;-3;7;2:3;-7;5;2}" />
          <Argument label="Массив2" value="F9:F12" result="{13,3491124260355:0,88757396449..." />
        </div>
      </fieldset>
      <p className="mt-[3px] flex pl-[337px] font-['Open_Sans','Noto_Sans',sans-serif]"><span className="w-[17px]">=</span>{"{88:88:181:99}"}</p>
      <p className="mt-[3px] mr-[4px]">
        Возвращает матричное произведение двух массивов; результат имеет то же число строк, что и первый массив, и то же число столбцов, что и второй массив.
      </p>
      <div className="mt-[11px] flex">
        <b className="w-[198px] shrink-0 text-right font-['Open_Sans','Noto_Sans',sans-serif]">Массив2</b>
        <p className="ml-[8px]">первый из перемножаемых массивов, число столбцов в нем должно равняться числу строк во втором массиве.</p>
      </div>
      <hr className="mt-[24px] mr-[4px] border-[#dcdcdc]" />
      <p className="mt-[13px] flex gap-[10px]"><span>Значение:</span><output>88</output></p>
      <div className="mt-auto flex items-center gap-[9px] pr-[5px]">
        <a href="#help" className="mr-auto text-[#0000ee] underline">Справка по этой функции</a>
        <button type="button" className="h-[22px] w-[75px] border border-[#3399ff] bg-linear-to-b from-[#f0f0f0] to-[#e5e5e5]">OK</button>
        <button type="button" className="h-[22px] w-[75px] border border-[#acacac] bg-linear-to-b from-[#f0f0f0] to-[#e5e5e5]">Отмена</button>
      </div>
    </div>
  </div>
);

/* ---------- taskbar ---------- */

const Tile = ({ from, to, rim, children }: { from: string; to: string; rim: string; children: ReactNode }) => (
  <svg width="32" height="32" viewBox="0 0 32 32" fill="none">
    <defs>
      <linearGradient id={`tile${from.slice(1)}`} x1="0" y1="0" x2="0" y2="1">
        <stop stopColor={from} />
        <stop offset="1" stopColor={to} />
      </linearGradient>
    </defs>
    <rect x="2" y="2" width="28" height="28" rx="7" fill={`url(#tile${from.slice(1)})`} stroke={rim} strokeWidth="2.500" />
    {children}
  </svg>
);

const apps: { name: string; open?: boolean; active?: boolean; stacked?: boolean; icon: ReactNode }[] = [
  {
    name: "Проводник", open: true, stacked: true,
    icon: (
      <svg width="34" height="32" viewBox="0 0 34 32" fill="none">
        <path d="M2 5h8l2 2h9l2 2h8v20H2Z" fill="#f2dc8b" stroke="#c9a94a" />
        <path d="M5 3h4v3H5z" fill="#39a54a" /><path d="M12 5h6v3h-6z" fill="#e8432f" /><path d="M21 8h6v3h-6z" fill="#3a9fe0" />
        <path d="M2 11h29v18H2z" fill="#f8e9aa" stroke="#d9bd62" />
        <path d="M7 30V20h21v10h-5v-5H12v5Z" fill="#8fd0ea" stroke="#4fa9d0" />
        <path d="m9 12 1 5 5 1-5 1-1 5-1-5-5-1 5-1Z" fill="#fff" opacity=".8" />
      </svg>
    ),
  },
  {
    name: "Internet Explorer", open: true,
    icon: (
      <svg width="34" height="34" viewBox="0 0 34 34" fill="none">
        <path d="M28 23c-2 3.500-5.500 5.500-9.500 5.500-6 0-9.500-4-9.500-9.500S12.500 9.500 18.500 9.500 28 13.500 28 19H11" stroke="#5cc8f5" strokeWidth="5" />
        <path d="M5 31c-6-4 4-22 17-27 5-2 8-1 7 4-1-3-5-2-9 0C9 14 3 25 6 29Z" fill="#fbc91d" stroke="#e0a310" />
      </svg>
    ),
  },
  {
    name: "Фотографии",
    icon: (
      <Tile from="#fff2d5" to="#e6a03c" rim="#a5683c">
        <rect x="6" y="6" width="20" height="20" fill="#f5cf7c" stroke="#fff" />
        <path d="M7 20c6-3 12 3 18 0v5H7Z" fill="#b5521c" />
        <circle cx="16" cy="13" r="5.500" fill="#7d705c" stroke="#453b2f" strokeDasharray="1 1" />
        <path d="M16 15v11" stroke="#2b2118" strokeWidth="1.500" />
      </Tile>
    ),
  },
  {
    name: "Word", open: true,
    icon: (
      <svg width="32" height="32" viewBox="0 0 32 32" fill="none">
        <path d="M2 2h20l3 4v20H2C0 18 0 8 2 2Z" fill="#2d5cb0" stroke="#dfe8f8" strokeWidth="1.500" />
        <path d="m11 4 20 2-2 25-18-3Z" fill="#f7faff" stroke="#c3d0e6" />
        <path d="m11 9 2.500 8 2-6 2 6L20 9" stroke="#2450a0" strokeWidth="2" />
        <path d="M22 9h6M22 12.500h6M22 16h5M12 20h15M12 23h14M12 26h10" stroke="#2450a0" strokeWidth="1.500" />
      </svg>
    ),
  },
  {
    name: "Звук",
    icon: (
      <Tile from="#5a5a5a" to="#242424" rim="#b97c48">
        <circle cx="16" cy="16" r="11" fill="#333" stroke="#777" strokeWidth="2" />
        <circle cx="16" cy="16" r="7" fill="#454545" stroke="#1c1c1c" />
        <circle cx="16" cy="16" r="3.500" fill="#252525" stroke="#888" />
      </Tile>
    ),
  },
  {
    name: "Документы",
    icon: (
      <Tile from="#8f969c" to="#3d4043" rim="#b97c48">
        <path d="M5 12V4l8 3 4-5 9 4v8Z" fill="#4bb9df" />
        <path d="m9 11 5-6 5 4 4-5 2 8Z" fill="#e4f5fb" />
        <path d="M4 13h12l4-3h8v17H4Z" fill="#6a6f73" />
        <text x="5" y="22" fontSize="7" fontWeight="700" fill="#16191c" fontFamily="Open Sans">DOC</text>
        <path d="M13 27h9" stroke="#111" strokeWidth="2" />
      </Tile>
    ),
  },
  {
    name: "Параметры",
    icon: (
      <Tile from="#3fb2df" to="#0b6291" rim="#143448">
        <path d="M8 7h12v17H8zM11 11h6M11 14.500h6M11 18h4" stroke="#fff" strokeWidth="1.500" />
        <circle cx="21" cy="21" r="5" stroke="#fff" strokeWidth="3" strokeDasharray="2.200 1.700" />
        <circle cx="21" cy="21" r="3" stroke="#fff" strokeWidth="2" />
      </Tile>
    ),
  },
  {
    name: "Opera", open: true,
    icon: (
      <svg width="30" height="32" viewBox="0 0 30 32">
        <path fillRule="evenodd" d="M15 1C6 1 1 8 1 16s5 15 14 15 14-7 14-15S24 1 15 1Zm0 3c4 0 5 5 5 12s-1 12-5 12-5-5-5-12 1-12 5-12Z" fill="#e3343f" stroke="#b81e2b" />
      </svg>
    ),
  },
  {
    name: "Выключение",
    icon: (
      <Tile from="#bb1620" to="#600409" rim="#3a1b1f">
        <path d="M12 10.500a7 7 0 1 0 8 0M16 7v8" stroke="#fff" strokeWidth="2.400" strokeLinecap="round" />
      </Tile>
    ),
  },
  {
    name: "M", open: true,
    icon: (
      <svg width="34" height="32" viewBox="0 0 34 32">
        <path d="M1 4h11l7 13 6-13h8v27h-9V17l-5 9h-2l-6-9v14H4V9Z" fill="#4b6980" stroke="#33495b" />
      </svg>
    ),
  },
  {
    name: "Adobe Reader", open: true, stacked: true,
    icon: (
      <svg width="28" height="28" viewBox="0 0 28 28" fill="none">
        <path d="M0 0h28v28H0z" fill="#c9151b" />
        <path d="M5 21c2-5 9-6 17-5 3 1 2 3-1 2-5-2-8-7-8-12 0-3 3-2 2 2-1 5-4 11-8 14-2 1-2 0-2-1Z" stroke="#fff" strokeWidth="1.500" />
      </svg>
    ),
  },
  {
    name: "Просмотр", open: true,
    icon: (
      <svg width="30" height="26" viewBox="0 0 30 26" fill="none">
        <path d="M3 3h24v20H3z" fill="#aee0f7" stroke="#fff" strokeWidth="1.500" />
        <path d="M4 12c6-4 14 3 22 0v4H4Z" fill="#3f7558" />
        <path d="M4 16h22v6H4z" fill="#357fae" />
        <path d="M1 6V1h6M23 1h6v5M29 20v5h-6M7 25H1v-5" stroke="#3b9ae0" strokeWidth="2" />
      </svg>
    ),
  },
  {
    name: "Excel", open: true, active: true,
    icon: (
      <svg width="32" height="32" viewBox="0 0 32 32" fill="none">
        <path d="M3 1h22l3 4v22H1C0 17 0 8 3 1Z" fill="#eaf7df" stroke="#62b52e" strokeWidth="2.500" />
        <path d="m13 6 18 2-2 23-19-3Z" fill="#f6fbf4" stroke="#9bb99b" />
        <path d="m7 9 9 11M16 9 7 20" stroke="#1f6e2c" strokeWidth="3" />
        <path d="M19 11h10M19 15h10M19 19h9M12 24h16M12 27h14" stroke="#4c9a58" strokeWidth="2.500" strokeDasharray="4 1.500" />
      </svg>
    ),
  },
];

const Taskbar = () => (
  <div className="flex h-[40px] shrink-0 items-stretch justify-between border-t border-[#3a6ea5] bg-linear-to-b from-[#5290cc] to-[#4a82bf] pl-[17px] text-white">
    <div className="flex gap-[4px]">
      {apps.map((app) => (
        <div key={app.name} className="flex w-[58px] gap-[2px]">
          <button
            type="button"
            aria-label={app.name}
            className={clsx(
              "flex flex-1 items-center justify-center border",
              app.active && "border-white bg-[#98b8db]",
              app.open && !app.active && "border-[#9dbfe0] bg-[#6f9fd0]",
              !app.open && "border-transparent",
            )}
          >
            {app.icon}
          </button>
          {app.stacked && <span className="w-[3px] border-y border-r border-[#9dbfe0] bg-[#6f9fd0]" />}
        </div>
      ))}
    </div>
    <div className="flex items-center pr-[25px] text-[11px]">
      <button type="button" aria-label="Скрытые значки" className="mr-[13px]">
        <svg width="8" height="4" viewBox="0 0 8 4"><path d="M0 4h8L4 0Z" fill="#fff" /></svg>
      </button>
      <svg width="16" height="16" viewBox="0 0 16 16" fill="none" stroke="#fff" className="mr-[8px]">
        <path d="M8.500 3h6v12h-6zM10.500 1.500h2" strokeWidth="1.500" />
        <path d="M2 1v3M5 1v3M1 4.500h5v3H1zM3.500 8v7" strokeWidth="1.300" />
      </svg>
      <svg width="17" height="15" viewBox="0 0 17 15" fill="#fff" className="mr-[9px]">
        <path d="M1 11h3v3H1zM5 9h3v5H5zM9 6h3v8H9z" />
        <path d="M13 2h3v12h-3z" fill="#777" />
        <path d="M1 1h7L4.500 5ZM4.500 1v9" stroke="#fff" fill="none" />
      </svg>
      <svg width="15" height="16" viewBox="0 0 15 16" fill="none" className="mr-[15px]">
        <path d="M1 5.500h3l4-4v13l-4-4H1Z" fill="#fff" stroke="#284d75" />
        <path d="M10 5c1.500 1.500 1.500 4.500 0 6M12 3.500c2.500 2.500 2.500 6.500 0 9" stroke="#fff" />
      </svg>
      <span className="mr-[16px] text-[12px]">РУС</span>
      <time dateTime="2015-05-30T19:59" className="text-center leading-[17px]">19:59<br />30.05.2015</time>
    </div>
  </div>
);

export default function App() {
  return (
    <div className="relative flex h-screen flex-col overflow-hidden bg-[#bfdbff] font-['Open_Sans','Noto_Sans',sans-serif] text-[12px]">
      <OfficeButton />
      <TitleBar />
      <TabRow />
      <Ribbon />
      <FormulaBar />
      <main className="flex min-h-0 flex-1 bg-white">
        <Sheet />
        <VerticalScroll />
      </main>
      <SheetTabs />
      <StatusBar />
      <Taskbar />
      <ArgumentsDialog />
    </div>
  );
}
